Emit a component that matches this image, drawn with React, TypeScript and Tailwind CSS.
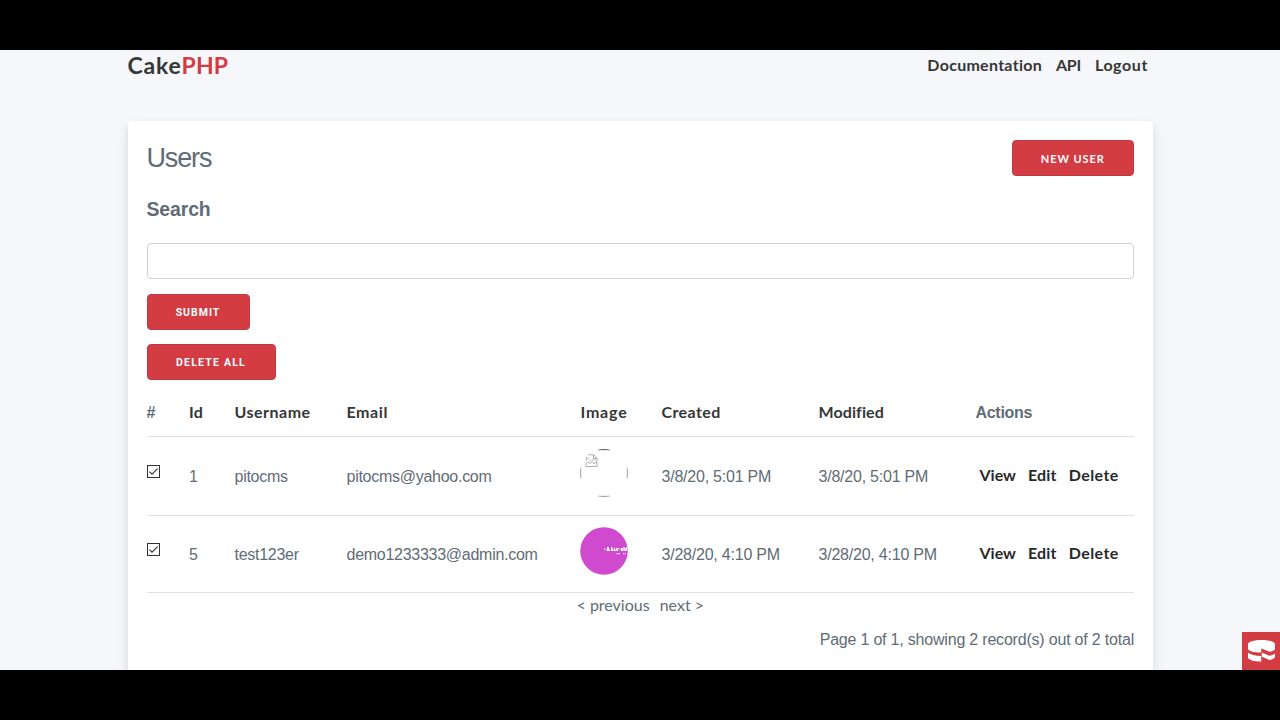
import type { ReactNode } from 'react';

const users = [
  { id: '1', username: 'pitocms', email: 'pitocms@yahoo.com', date: '3/8/20, 5:01 PM', hasImage: false, height: 'h-[79px]' },
  { id: '5', username: 'test123er', email: 'demo1233333@admin.com', date: '3/28/20, 4:10 PM', hasImage: true, height: 'h-[77px]' },
];

const columns = 'grid grid-cols-[42.5px_45.5px_112px_234px_81px_157px_157px_157px]';

function Checkbox() {
  return (
    <svg className="block size-[13px]" viewBox="0 0 13 13" fill="none" role="img" aria-label="Selected">
      <rect x="0.5" y="0.5" width="12" height="12" fill="#fff" stroke="#333" />
      <path d="M2.5 6.6 5 9.1 10.6 3.6" stroke="#333" strokeWidth="1.15" />
    </svg>
  );
}

function MissingAvatar() {
  return (
    <svg className="-ml-[0.5px] block size-12" viewBox="0 0 48 48" fill="none" role="img" aria-label="Missing image">
      <path d="M18 1Q24-.4 30 1Q24 .9 18 1Z" fill="#333" stroke="#555" strokeWidth="0.3" />
      <path d="M1 18Q-.4 24 1 30Q.9 24 1 18ZM47 18Q48.4 24 47 30Q47.1 24 47 18ZM18 47Q24 48.4 30 47Q24 47.1 18 47Z" fill="#888" stroke="#999" strokeWidth="0.3" />
      <g stroke="#a3a3a3" strokeWidth="0.9">
        <path d="M6.5 10.5V8M8 5.8H13.7L17 9.3V12M13.5 6V9.5H17" />
        <path d="M6 11.5 8.5 9 11.5 12 14 10 17 13.5" strokeDasharray="1.5 .6" />
        <path d="M6 14.5 8 12.8 10 14.6 12 12.8 14 14.6 17 13V17.5H6Z" />
      </g>
    </svg>
  );
}

function Avatar() {
  return (
    <svg className="-ml-[0.5px] block size-12" viewBox="0 0 48 48" role="img" aria-label="Profile image">
      <circle cx="24" cy="24" r="23.8" fill="#d04ad0" />
      <g fill="#fff">
        <path d="M24 21.5h1.5v1H24zM27 20h2v2.6h1V24h-3.5v-1.4h.5zM31 20h1.4v2.6h1.4V24H31zM34 21h1v2h.8v-2h1v3H34zM37 21h2v1h-1v2h-1zM39.3 21.8h1.2v1h-1.2zM41 21h2v3h-2zM43.4 20h1.1v1h1.2v3h-2.3zM46.1 20h1v4h-1z" />
        <path d="M36.5 26H40v1.2h-3.5zM43 26h1v1.2h-1zM44.5 26H46v1.2h-1.5z" opacity=".7" />
      </g>
    </svg>
  );
}

function Button({ children, className }: { children: ReactNode; className: string }) {
  return (
    <button className={`flex h-9 shrink-0 items-center justify-center rounded-[4px] border border-[#bd3c43] bg-[#d33c43] pt-0.5 font-bold text-white ${className}`}>
      {children}
    </button>
  );
}

export default function App() {
  return (
    <div className="flex h-[720px] w-[1280px] flex-col overflow-hidden bg-black py-[50px] font-['Liberation_Sans',sans-serif] text-base text-[#606c76]">
      <div className="relative flex h-[620px] flex-col overflow-hidden bg-[#f5f7fa] pr-[127px] pl-[127.5px]">
        <nav className="flex h-[71px] shrink-0 items-start justify-between pr-[5px] font-['Lato',sans-serif] font-bold text-[#363637]">
          <a className="flex h-[30px] items-center text-[23px] tracking-[0.8px]">
            Cake<span className="tracking-[0.1px] text-[#d33c43]">PHP</span>
          </a>
          <div className="flex h-[30px] items-center gap-[14px]">
            <a className="tracking-[0.28px]">Documentation</a>
            <a className="tracking-[-0.3px]">API</a>
            <a className="tracking-[0.6px]">Logout</a>
          </div>
        </nav>

        <main className="flex h-[560px] shrink-0 flex-col rounded-[4px] bg-white px-[19px] pt-[19px] shadow-[0_7px_14px_0_rgba(60,66,87,0.1),0_3px_6px_0_rgba(0,0,0,0.07)]">
          <div className="flex h-[54px] shrink-0 items-start justify-between">
            <h3 className="text-[27px] leading-9 tracking-[-1.15px]">Users</h3>
            <Button className="w-[122.5px] font-['Lato',sans-serif] text-[11px] tracking-[0.9px]">NEW USER</Button>
          </div>
          <h4 className="h-[49px] shrink-0 text-[19.4px] leading-[30px] font-bold tracking-[-0.1px]">Search</h4>
          <input aria-label="Search" className="h-9 w-full shrink-0 rounded-[4px] border border-[#d1d1d1] px-3 outline-none" />
          <div className="flex shrink-0 flex-col items-start gap-[14.5px] pt-[14.5px]">
            <Button className="w-[103px] font-['Roboto',sans-serif] text-[10.5px] tracking-[1px]">SUBMIT</Button>
            <Button className="w-[129px] font-['Roboto',sans-serif] text-[10.5px] tracking-[1.2px]">DELETE ALL</Button>
          </div>

          <div className={`${columns} mt-2 h-[49px] shrink-0 items-center border-b border-[#e1e1e1] font-['Lato',sans-serif] font-bold text-[#363637]`}>
            <span className="pt-0.5 font-['Liberation_Sans',sans-serif] text-[#606c76]">#</span>
            <span className="tracking-[0.3px]">Id</span>
            <span className="tracking-[0.5px]">Username</span>
            <span className="tracking-[0.6px]">Email</span>
            <span className="tracking-[0.8px]">Image</span>
            <span className="tracking-[0.4px]">Created</span>
            <span className="tracking-[0.1px]">Modified</span>
            <span className="pt-0.5 font-['Liberation_Sans',sans-serif] tracking-[-0.3px] text-[#606c76]">Actions</span>
          </div>
          {users.map((user) => (
            <div key={user.id} className={`${columns} ${user.height} shrink-0 items-center border-b border-[#e1e1e1] tracking-[-0.27px]`}>
              <span className="pb-[9px]"><Checkbox /></span>
              <span className="pt-px">{user.id}</span>
              <span className="pt-px">{user.username}</span>
              <span className="pt-px">{user.email}</span>
              <span className="pb-[7px]">{user.hasImage ? <Avatar /> : <MissingAvatar />}</span>
              <span className="pt-px tracking-[-0.22px]">{user.date}</span>
              <span className="pt-px tracking-[-0.22px]">{user.date}</span>
              <span className="flex gap-3 pb-0.5 pl-1 font-['Lato',sans-serif] font-bold tracking-[0px] text-[#292929]">
                <a>View</a>
                <a className="tracking-[0.2px]">Edit</a>
                <a className="tracking-[0.4px]">Delete</a>
              </span>
            </div>
          ))}

          <div className="flex h-6 shrink-0 items-center justify-center gap-2.5 pb-px font-['Lato',sans-serif]">
            <span>&lt; previous</span>
            <span>next &gt;</span>
          </div>
          <p className="pt-[11px] text-right tracking-[-0.2px]">Page 1 of 1, showing 2 record(s) out of 2 total</p>
        </main>

        <div className="absolute right-0 bottom-0 flex h-[38px] w-[38px] items-center justify-center bg-[#d33c43]">
          <svg className="size-[38px]" viewBox="0 0 38 38" fill="#fff" role="img" aria-label="Debug toolbar">
            <path d="M6 12.5C6 9.6 12 8 19.5 8S33 9.6 33 12.5V16.5C33 18.3 30.5 19.3 27.5 19.8L19.5 16.6V20.6C12 20.6 6 19 6 16.5Z" />
            <path d="M6 20.6C8.5 22.8 13 24 19.5 24V29.6C12 29.6 6 27.8 6 25.2ZM19.5 20.6 27.5 23.8C30.2 23.2 32 22.4 33 21.2V24.8C33 26.2 31 27.4 27.5 28L19.5 24.6Z" />
            <path d="M19.5 17V29" stroke="#d33c43" strokeWidth="0.6" />
          </svg>
        </div>
      </div>
    </div>
  );
}
